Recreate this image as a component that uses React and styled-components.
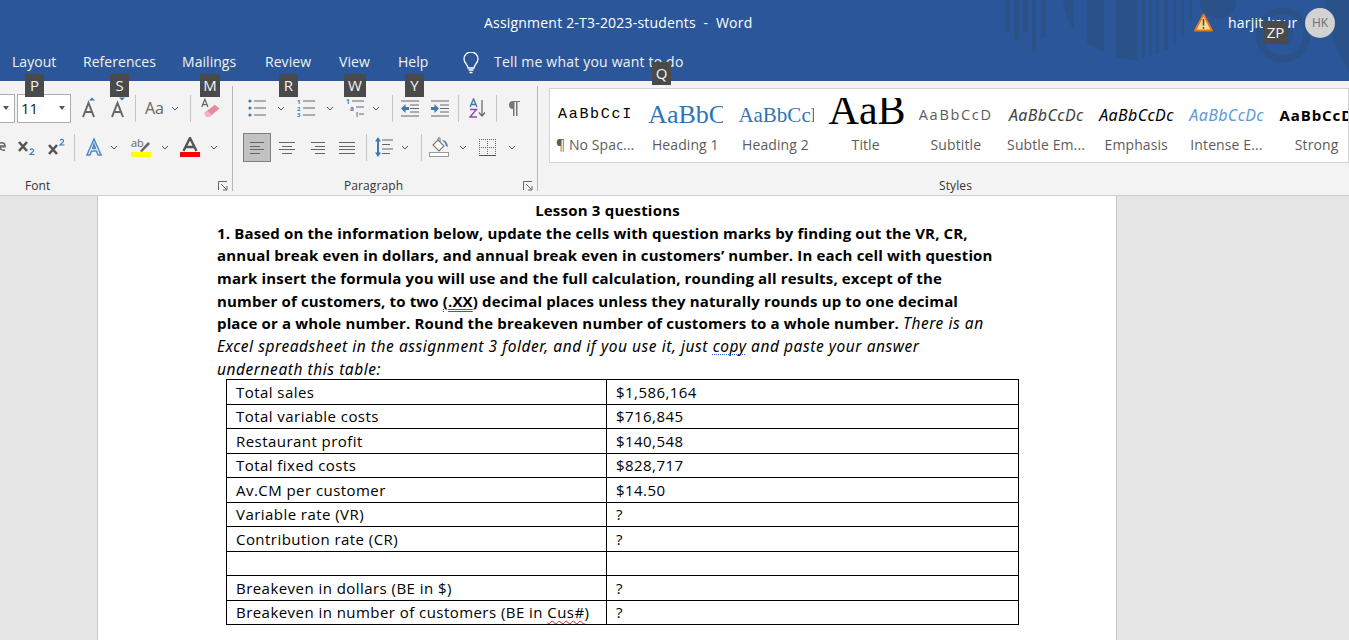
import React from 'react';
import styled, { createGlobalStyle } from 'styled-components';

const Global = createGlobalStyle`
  html, body { margin: 0; padding: 0; height: 100%; overflow: hidden; background: #e6e6e6; }
  body { font-family: "Open Sans", "Noto Sans", sans-serif; }
`;

const Window = styled.div`
  width: 1349px;
  height: 640px;
  display: flex;
  flex-direction: column;
  overflow: hidden;
  position: relative;
`;

const TitleBar = styled.header`
  height: 81px;
  flex: none;
  background: #2b579a;
  color: #fff;
  position: relative;
  display: flex;
  flex-direction: column;
`;

const Pattern = styled.svg`
  position: absolute;
  right: 0;
  top: 0;
`;

const TitleRow = styled.div`
  height: 45px;
  position: relative;
  display: flex;
  align-items: center;
  font-size: 14px;
  letter-spacing: 0.2px;
`;

const DocTitle = styled.div`
  margin-left: 484px;
  width: 268px;
  white-space: pre;
  padding-bottom: 1px;
`;

const Account = styled.div`
  margin-left: auto;
  display: flex;
  align-items: center;
  padding-right: 14px;
`;

const UserName = styled.span`
  margin-left: 15px;
  width: 69px;
  font-size: 14px;
  padding-bottom: 1px;
  white-space: nowrap;
`;

const Avatar = styled.div`
  width: 30px;
  height: 30px;
  border-radius: 50%;
  background: #d2d2d2;
  color: #6d6d6d;
  font-size: 12px;
  letter-spacing: 0;
  margin-left: 8px;
  display: flex;
  align-items: center;
  justify-content: center;
`;

const TabRow = styled.nav`
  height: 36px;
  position: relative;
  display: flex;
  align-items: flex-start;
  font-size: 14px;
  letter-spacing: 0.05px;
  color: #f1f1f1;
`;

const Tab = styled.span`
  margin-left: ${p => p.$ml}px;
  width: ${p => p.$w}px;
  line-height: 34px;
  white-space: nowrap;
`;

const TellMe = styled.span`
  margin-left: 15px;
  line-height: 33px;
  white-space: nowrap;
  letter-spacing: 0.2px;
`;

const Bulb = styled.svg`
  margin-left: 33px;
  margin-top: 7px;
`;

const KeyTip = styled.span`
  position: absolute;
  left: ${p => p.$x}px;
  top: ${p => p.$y}px;
  width: ${p => p.$w}px;
  height: 23px;
  background: #4a4a4a;
  color: #f4f4f4;
  font-size: 15px;
  line-height: 23px;
  text-align: center;
  z-index: 5;
`;

const Ribbon = styled.section`
  flex: none;
  height: 115px;
  box-sizing: border-box;
  background: #f3f3f3;
  border-bottom: 1px solid #cfcfcf;
  display: flex;
  color: #444;
`;

const Group = styled.div`
  width: ${p => p.$w}px;
  height: 105px;
  flex: none;
  box-sizing: border-box;
  position: relative;
  display: flex;
  flex-direction: column;
  margin-top: 5px;
  padding-top: 8px;
  border-right: ${p => (p.$last ? 'none' : '1px solid #b6b6b6')};
`;

const Row = styled.div`
  height: 28px;
  display: flex;
  align-items: center;
  margin-top: ${p => p.$mt || 0}px;
`;

const Tool = styled.div`
  flex: none;
  margin-left: ${p => p.$ml || 0}px;
  width: ${p => p.$w}px;
  height: 28px;
  display: flex;
  align-items: center;
  justify-content: center;
  overflow: hidden;
`;

const ActiveTool = styled(Tool)`
  height: 29px;
  background: #c2c2c2;
  border: 1px solid #7f7f7f;
  box-sizing: border-box;
`;

const Sep = styled.div`
  flex: none;
  width: 1px;
  height: 27px;
  background: #c6c6c6;
  margin-left: ${p => p.$ml}px;
`;

const Combo = styled.div`
  flex: none;
  box-sizing: border-box;
  height: 29px;
  width: ${p => p.$w}px;
  margin-left: ${p => p.$ml || 0}px;
  border: 1px solid #ababab;
  background: #fff;
  display: flex;
  align-items: center;
  justify-content: flex-end;
  padding-right: 5px;
  font-size: 15px;
  color: #222;
`;

const ComboText = styled.span`
  margin-right: auto;
  padding-left: 3px;
`;

const Caret = styled.i`
  width: 0;
  height: 0;
  border-left: 3.5px solid transparent;
  border-right: 3.5px solid transparent;
  border-top: 4px solid #555;
`;

const GroupLabel = styled.div`
  position: absolute;
  left: ${p => p.$x}px;
  top: 92px;
  font-size: 12px;
  line-height: 16px;
  letter-spacing: 0.1px;
  color: #333;
  white-space: nowrap;
`;

const Launcher = styled.svg`
  position: absolute;
  left: ${p => p.$x}px;
  top: 95px;
`;

const Gallery = styled.div`
  position: absolute;
  left: 11px;
  top: 2px;
  width: 800px;
  height: 75px;
  box-sizing: border-box;
  border: 1px solid #d2d2d2;
  background: #fff;
  display: flex;
  overflow: hidden;
`;

const StyleItem = styled.div`
  flex: none;
  width: 90.2px;
  height: 73px;
  display: flex;
  flex-direction: column;
  align-items: center;
`;

const Preview = styled.div`
  align-self: flex-start;
  margin-left: 3px;
  margin-top: ${p => p.$top || 0}px;
  height: ${p => 44 - (p.$top || 0)}px;
  width: ${p => (p.$clip || 82) + 5}px;
  padding-left: 5px;
  box-sizing: border-box;
  overflow: hidden;
  line-height: ${p => p.$lh || 52}px;
  white-space: nowrap;
  font-family: ${p => p.$font || '"Open Sans"'}, sans-serif;
  font-size: ${p => p.$size}px;
  font-style: ${p => (p.$italic ? 'italic' : 'normal')};
  font-weight: ${p => (p.$bold ? 700 : 400)};
  letter-spacing: ${p => p.$ls || 0}px;
  color: ${p => p.$color || '#000'};
`;

const StyleName = styled.div`
  font-size: 14px;
  letter-spacing: 0.1px;
  color: #5c5c5c;
  line-height: 24px;
  white-space: nowrap;
`;

const Workspace = styled.main`
  flex: 1;
  min-height: 0;
  background: #e6e6e6;
  display: flex;
  padding-left: 98px;
`;

const Page = styled.article`
  background: #fff;
  border-left: 1px solid #c8c8c8;
  border-right: 1px solid #c8c8c8;
  padding: 4px 0 0 119px;
  margin-left: -1px;
  width: 899px;
  color: #000;
  font-size: 15px;
`;

const Heading = styled.div`
  font-weight: 700;
  line-height: 21.6px;
  letter-spacing: 0.2px;
  width: 781px;
  text-align: center;
`;

const Line = styled.div`
  line-height: 22.65px;
  white-space: nowrap;
  font-weight: 700;
  letter-spacing: 0.15px;
`;

const italicText = `
  font-family: "Noto Sans", sans-serif;
  font-size: 15.5px;
  font-weight: 400;
  font-style: italic;
  letter-spacing: 0.55px;
`;

const Emph = styled.em`
  ${italicText}
`;

const ItalicLine = styled(Line)`
  ${italicText}
`;

const DoubleMark = styled.span`
  text-decoration: underline double #2b5fc4 1px;
  text-underline-offset: 2px;
`;

const DotMark = styled.span`
  text-decoration: underline dotted #2b5fc4 1px;
  text-underline-offset: 2px;
`;

const WavyMark = styled.span`
  text-decoration: underline wavy #d02020 1px;
  text-underline-offset: 2px;
`;

const Sheet = styled.table`
  margin: -1px 0 0 9px;
  border-collapse: collapse;
  width: 793px;
  table-layout: fixed;
`;

const Cell = styled.td`
  border: 1px solid #000;
  height: 24.5px;
  padding: 0 0 0 9px;
  line-height: 22px;
  letter-spacing: 0.45px;
  box-sizing: border-box;
  white-space: nowrap;
  width: ${p => p.$w || 'auto'};
`;

const Chev = ({ ml = 0 }) => (
  <Tool $w={9} $ml={ml}>
    <svg width="8" height="5" viewBox="0 0 8 5"><path d="M1 1l3 3 3-3" fill="none" stroke="#555" strokeWidth="1" /></svg>
  </Tool>
);

const FontA = ({ up }) => (
  <svg width="18" height="22" viewBox="0 0 18 22">
    <path d="M3 20L8.500 6 14 20M5 15h7" fill="none" stroke="#666" strokeWidth="2" />
    {up ? <path d="M9 3.500l3-3 3 3z" fill="#3f78b5" /> : <path d="M10 .5h6l-3 3z" fill="#3f78b5" />}
  </svg>
);

const Eraser = () => (
  <svg width="20" height="21" viewBox="0 0 26 26">
    <path d="M1 11l4-10 4 10M2.500 8h5" fill="none" stroke="#666" strokeWidth="1.600" />
    <path d="M4 19l14-11 6 5-13 11h-4z" fill="#e98a9b" />
    <path d="M4 19l4-3 6 5-3 3h-4z" fill="#f2b5c0" />
  </svg>
);

const Subscript = ({ sup }) => (
  <svg width="18" height="18" viewBox="0 0 18 18">
    <path d={sup ? 'M1 7l8 9M9 7l-8 9' : 'M1 4l8 9M9 4l-8 9'} fill="none" stroke="#555" strokeWidth="2.600" />
    <path d={sup ? 'M12 2.500q1-1.500 2.500-1t.7 2.500L12 7h4.500' : 'M12 12q1-1.500 2.500-1t.7 2.500L12 16.500h4.500'} fill="none" stroke="#3f78b5" strokeWidth="1.100" />
  </svg>
);

const TextEffect = () => (
  <svg width="18" height="20" viewBox="0 0 18 20">
    <path d="M2 18L9 2l7 16h-3l-1.500-4h-5L5 18zM7.500 11.500h3L9 7z" fill="#fff" stroke="#4a86c8" strokeWidth="1.500" />
  </svg>
);

const Highlight = () => (
  <svg width="20" height="21" viewBox="0 0 20 21">
    <text x="0" y="10" fontSize="11" fontFamily="Open Sans" fill="#666">ab</text>
    <path d="M9 14l8-9 2 2-8 8z" fill="#666" />
    <rect y="15" width="20" height="5" fill="#ffff00" />
  </svg>
);

const FontColor = () => (
  <svg width="20" height="21" viewBox="0 0 20 21">
    <path d="M3.500 14L10 1l6.500 13M5.500 10h9" fill="none" stroke="#555" strokeWidth="2.400" />
    <rect y="15" width="20" height="5" fill="#ff0000" />
  </svg>
);

const Bullets = () => (
  <svg width="18" height="18" viewBox="0 0 18 18">
    <g fill="#3f78b5"><circle cx="2" cy="2" r="1.600" /><circle cx="2" cy="9" r="1.600" /><circle cx="2" cy="16" r="1.600" /></g>
    <path d="M6 2h12M6 9h12M6 16h12" stroke="#666" />
  </svg>
);

const Numbering = () => (
  <svg width="18" height="18" viewBox="0 0 18 18">
    <g fill="#3f78b5" fontSize="6" fontFamily="Open Sans" fontWeight="700">
      <text x="0" y="5">1</text><text x="0" y="12">2</text><text x="0" y="18">3</text>
    </g>
    <path d="M6 2h12M6 9h12M6 16h12" stroke="#666" />
  </svg>
);

const Multilevel = () => (
  <svg width="19" height="18" viewBox="0 0 19 18">
    <g fill="#3f78b5" fontSize="6.500" fontFamily="Open Sans" fontWeight="700">
      <text x="0" y="5">1</text><text x="4" y="12">a</text><text x="10" y="18">i</text>
    </g>
    <path d="M6 2h12M10 8h8M13 15h5" stroke="#666" />
  </svg>
);

const Indent = ({ out }) => (
  <svg width="18" height="17" viewBox="0 0 18 17">
    <path d="M0 1h18M9 5h9M9 8.500h9M9 12h9M0 16h18" stroke="#666" />
    {out
      ? <path d="M0 8.500L4.500 4v3H8v3H4.500v3z" fill="#3f78b5" />
      : <path d="M8 8.500L3.500 4v3H0v3h3.500v3z" fill="#3f78b5" />}
  </svg>
);

const Sort = () => (
  <svg width="18" height="20" viewBox="0 0 18 20">
    <path d="M1 9l3.500-8L8 9M2 6.500h5" fill="none" stroke="#3f78b5" strokeWidth="1.400" />
    <path d="M1 11.500h6.500L1 19h7" fill="none" stroke="#8a4fa8" strokeWidth="1.400" />
    <path d="M13 2v16M10 14.500l3 3.500 3-3.500" fill="none" stroke="#666" strokeWidth="1.200" />
  </svg>
);

const Pilcrow = () => (
  <svg width="12" height="15" viewBox="0 0 12 15">
    <path d="M5 15V8a4 4 0 010-8h7v1H9.500v14H8V1H6.500v14z" fill="#777" />
  </svg>
);

const Align = ({ rows }) => (
  <svg width="17" height="13" viewBox="0 0 17 13">
    {rows.map(([x1, x2], i) => (
      <path key={i} d={`M${x1} ${Math.round(i * 3.5) + 1.5}H${x2}`} stroke="#666" />
    ))}
  </svg>
);

const LineSpacing = () => (
  <svg width="18" height="20" viewBox="0 0 18 20">
    <path d="M7 3h11M7 7.500h8M7 12h11M7 16.500h8" stroke="#666" />
    <path d="M3 0l3 4.500H4v11h2L3 20 0 15.500h2v-11H0z" fill="#3f78b5" />
  </svg>
);

const Shading = () => (
  <svg width="20" height="20" viewBox="0 0 20 20">
    <path d="M4 8l5-5 6 6-5 5z" fill="#fff" stroke="#777" strokeWidth="1.100" />
    <path d="M9 3V1h2v4" fill="none" stroke="#777" />
    <path d="M13 3q5 0 6 7l-2-1-1-3z" fill="#3f78b5" />
    <rect x=".5" y="15.500" width="19" height="4" fill="#fff" stroke="#999" />
  </svg>
);

const Borders = () => (
  <svg width="17" height="17" viewBox="0 0 17 17">
    <path d="M0 .5h17M0 8.500h17M.5 0v16M8.500 0v16M16.500 0v16" fill="none" stroke="#666" strokeDasharray="1 1" />
    <path d="M0 16.500h17" stroke="#555" />
  </svg>
);

const LauncherIcon = ({ x }) => (
  <Launcher $x={x} width="10" height="10" viewBox="0 0 10 10">
    <path d="M.5 9V.5H9M3 3l6 6M9 5v4H5" fill="none" stroke="#666" />
  </Launcher>
);

const styleItems = [
  { name: '¶ No Spac...', text: 'AaBbCcI', font: '"Liberation Mono"', size: 15, ls: 1.7, clip: 75 },
  { name: 'Heading 1', text: 'AaBbC', font: '"Liberation Serif"', size: 26, color: '#2e74b5', clip: 75 },
  { name: 'Heading 2', text: 'AaBbCcl', font: '"Liberation Serif"', size: 21, color: '#2e74b5', clip: 76 },
  { name: 'Title', text: 'AaB', font: '"Liberation Serif"', size: 42, clip: 75, top: 9, lh: 24 },
  { name: 'Subtitle', text: 'AaBbCcD', size: 14.5, ls: 1.7, color: '#5a5a5a' },
  { name: 'Subtle Em...', text: 'AaBbCcDc', font: '"Noto Sans"', size: 16, ls: 0.4, italic: true, color: '#404040' },
  { name: 'Emphasis', text: 'AaBbCcDc', font: '"Noto Sans"', size: 16, ls: 0.4, italic: true },
  { name: 'Intense E...', text: 'AaBbCcDc', font: '"Noto Sans"', size: 16, ls: 0.4, italic: true, color: '#5b9bd5' },
  { name: 'Strong', text: 'AaBbCcD', size: 15, ls: 0.9, bold: true },
];

const tableRows = [
  ['Total sales', '$1,586,164'],
  ['Total variable costs', '$716,845'],
  ['Restaurant profit', '$140,548'],
  ['Total fixed costs', '$828,717'],
  ['Av.CM per customer', '$14.50'],
  ['Variable rate (VR)', '?'],
  ['Contribution rate (CR)', '?'],
  ['', ''],
  ['Breakeven in dollars (BE in $)', '?'],
  [<>Breakeven in number of customers (BE in <WavyMark>Cus#</WavyMark>)</>, '?'],
];

const keyTips = [
  ['P', 25, 74, 19], ['S', 110, 74, 19], ['M', 200, 74, 20], ['R', 279, 74, 19],
  ['W', 344, 74, 22], ['Y', 405, 74, 19], ['Q', 652, 62, 19], ['ZP', 1263, 21, 25],
];

export default function App() {
  return (
    <Window>
      <Global />
      <TitleBar>
        <Pattern width="349" height="81" viewBox="0 0 349 81">
          <g fill="#2a5289">
            <rect x="5" width="5" height="32" />
            <rect x="14" width="5" height="41" />
            <rect x="23" width="5" height="32" />
            <rect x="32" width="4" height="52" />
            <rect x="41" width="5" height="38" />
            <path d="M63 0q2 20 11 30V0zM87 0v43l17 9V0zM116 0v58l21 2V0zM142 0h3v58h-3zM149 0h3v56h-3zM156 0h3v54h-3zM164 0h4v50h-4zM173 0h3v44h-3zM181 0h3v36h-3zM189 0h3v20h-3z" />
            <circle cx="218" cy="1" r="18" />
            <path d="M349 0h-24q5 45 24 70z" />
          </g>
          <circle cx="283" cy="35" r="24" fill="none" stroke="#2a5289" strokeWidth="7" />
          <circle cx="283" cy="35" r="10" fill="#2a5289" />
        </Pattern>
        <TitleRow>
          <DocTitle>Assignment 2-T3-2023-students  -  Word</DocTitle>
          <Account>
            <svg width="19" height="19" viewBox="0 0 19 19">
              <path d="M9.500 1.500L18 17.500H1z" fill="#fbd98e" stroke="#e8761a" strokeWidth="1.800" strokeLinejoin="round" />
              <path d="M9.500 6v6.500M9.500 14v1.800" stroke="#444" strokeWidth="1.500" />
            </svg>
            <UserName>harjit kaur</UserName>
            <Avatar>HK</Avatar>
          </Account>
        </TitleRow>
        <TabRow>
          <Tab $ml={12} $w={44}>Layout</Tab>
          <Tab $ml={27} $w={73}>References</Tab>
          <Tab $ml={26} $w={57}>Mailings</Tab>
          <Tab $ml={26} $w={47}>Review</Tab>
          <Tab $ml={27} $w={32}>View</Tab>
          <Tab $ml={27} $w={32}>Help</Tab>
          <Bulb width="16" height="22" viewBox="0 0 16 22">
            <path d="M5 16c0-3-4-5-4-9a7 7 0 0114 0c0 4-4 6-4 9z" fill="none" stroke="#fff" strokeWidth="1.300" />
            <path d="M5.500 18h5M6.500 20.500h3" stroke="#fff" strokeWidth="1.300" />
          </Bulb>
          <TellMe>Tell me what you want to do</TellMe>
        </TabRow>
      </TitleBar>
      {keyTips.map(([label, x, y, w]) => (
        <KeyTip key={label} $x={x} $y={y} $w={w}>{label}</KeyTip>
      ))}
      <Ribbon>
        <Group $w={233}>
          <Row>
            <Combo $w={61} $ml={-46}><Caret /></Combo>
            <Combo $w={54} $ml={2}><ComboText>11</ComboText><Caret /></Combo>
            <Tool $w={18} $ml={9}><FontA up /></Tool>
            <Tool $w={18} $ml={11}><FontA /></Tool>
            <Sep $ml={8} />
            <Tool $w={20} $ml={9}><svg width="20" height="18" viewBox="0 0 20 18"><text x="0" y="15" fontSize="16" fontFamily="Open Sans" fill="#666">Aa</text></svg></Tool>
            <Chev ml={5} />
            <Sep $ml={11} />
            <Tool $w={20} $ml={10}><Eraser /></Tool>
          </Row>
          <Row $mt={11}>
            <Tool $w={6}><svg width="6" height="12" viewBox="0 0 6 12"><path d="M0 6h6" stroke="#666" /><path d="M0 2q5-1 5 3H0q0 5 5 4" fill="none" stroke="#666" strokeWidth="1.500" /></svg></Tool>
            <Tool $w={18} $ml={12}><Subscript /></Tool>
            <Tool $w={18} $ml={12}><Subscript sup /></Tool>
            <Sep $ml={8} />
            <Tool $w={18} $ml={10}><TextEffect /></Tool>
            <Chev ml={6} />
            <Tool $w={20} $ml={13}><Highlight /></Tool>
            <Chev ml={9} />
            <Tool $w={20} $ml={11}><FontColor /></Tool>
            <Chev ml={9} />
          </Row>
          <GroupLabel $x={25}>Font</GroupLabel>
          <LauncherIcon x={218} />
        </Group>
        <Group $w={305}>
          <Row>
            <Tool $w={18} $ml={15}><Bullets /></Tool>
            <Chev ml={10} />
            <Tool $w={18} $ml={12}><Numbering /></Tool>
            <Chev ml={10} />
            <Tool $w={19} $ml={12}><Multilevel /></Tool>
            <Chev ml={6} />
            <Sep $ml={12} />
            <Tool $w={18} $ml={8}><Indent out /></Tool>
            <Tool $w={18} $ml={12}><Indent /></Tool>
            <Sep $ml={9} />
            <Tool $w={18} $ml={10}><Sort /></Tool>
            <Sep $ml={9} />
            <Tool $w={12} $ml={11}><Pilcrow /></Tool>
          </Row>
          <Row $mt={11}>
            <ActiveTool $w={28} $ml={10}><Align rows={[[1, 15], [1, 11], [1, 15], [1, 11]]} /></ActiveTool>
            <Tool $w={17} $ml={8}><Align rows={[[0, 16], [3, 13], [0, 16], [3, 13]]} /></Tool>
            <Tool $w={17} $ml={13}><Align rows={[[2, 16], [6, 16], [2, 16], [6, 16]]} /></Tool>
            <Tool $w={17} $ml={13}><Align rows={[[0, 16], [0, 16], [0, 16], [0, 16]]} /></Tool>
            <Sep $ml={10} />
            <Tool $w={18} $ml={8}><LineSpacing /></Tool>
            <Chev ml={7} />
            <Sep $ml={12} />
            <Tool $w={20} $ml={7}><Shading /></Tool>
            <Chev ml={9} />
            <Tool $w={17} $ml={12}><Borders /></Tool>
            <Chev ml={11} />
          </Row>
          <GroupLabel $x={111}>Paragraph</GroupLabel>
          <LauncherIcon x={290} />
        </Group>
        <Group $w={811} $last>
          <Gallery>
            {styleItems.map(s => (
              <StyleItem key={s.name}>
                <Preview $font={s.font} $size={s.size} $color={s.color} $italic={s.italic} $bold={s.bold} $ls={s.ls} $clip={s.clip} $top={s.top} $lh={s.lh}>{s.text}</Preview>
                <StyleName>{s.name}</StyleName>
              </StyleItem>
            ))}
          </Gallery>
          <GroupLabel $x={401}>Styles</GroupLabel>
        </Group>
      </Ribbon>
      <Workspace>
        <Page>
          <Heading>Lesson 3 questions</Heading>
          <Line>1. Based on the information below, update the cells with question marks by finding out the VR, CR,</Line>
          <Line>annual break even in dollars, and annual break even in customers’ number. In each cell with question</Line>
          <Line>mark insert the formula you will use and the full calculation, rounding all results, except of the</Line>
          <Line>number of customers, to two <DoubleMark>(.XX</DoubleMark>) decimal places unless they naturally rounds up to one decimal</Line>
          <Line>place or a whole number. Round the breakeven number of customers to a whole number. <Emph>There is an</Emph></Line>
          <ItalicLine>Excel spreadsheet in the assignment 3 folder, and if you use it, just <DotMark>copy</DotMark> and paste your answer</ItalicLine>
          <ItalicLine>underneath this table:</ItalicLine>
          <Sheet>
            <tbody>
              {tableRows.map((r, i) => (
                <tr key={i}>
                  <Cell $w="380px">{r[0]}</Cell>
                  <Cell>{r[1]}</Cell>
                </tr>
              ))}
            </tbody>
          </Sheet>
        </Page>
      </Workspace>
    </Window>
  );
}
